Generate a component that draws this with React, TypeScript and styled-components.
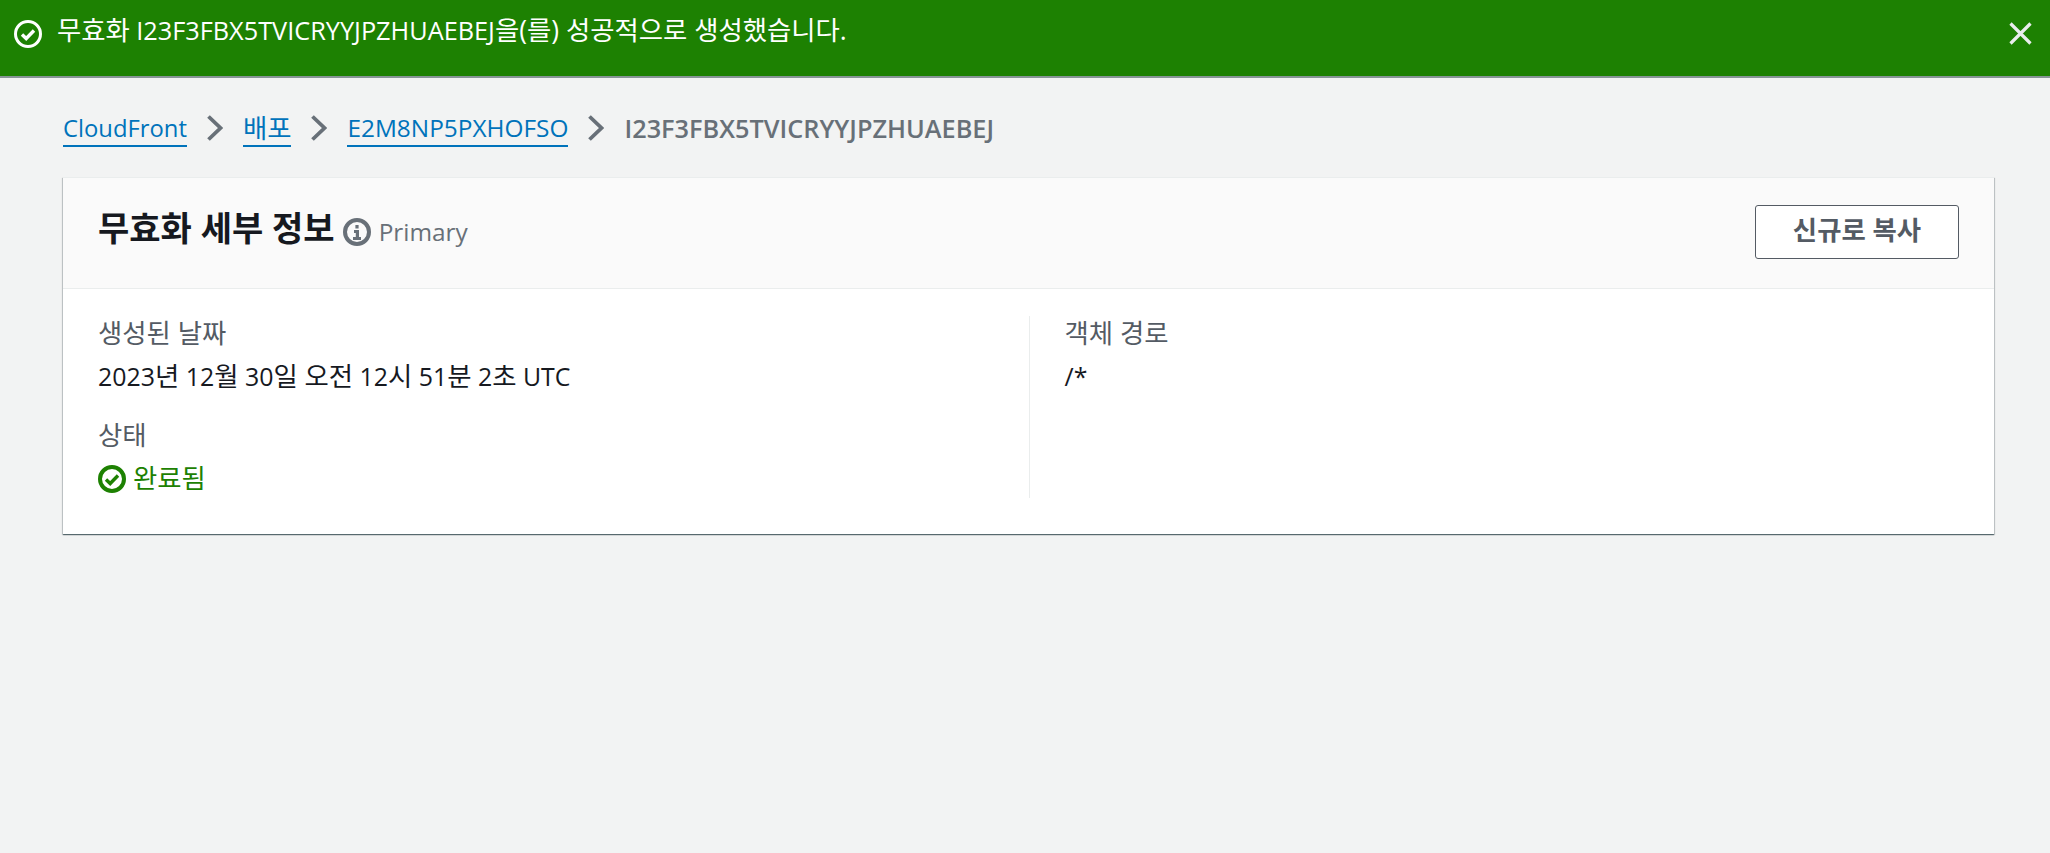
import React from "react";
import styled, { createGlobalStyle } from "styled-components";

const FONT = `"Open Sans", "Noto Sans CJK KR", sans-serif`;

const Global = createGlobalStyle`
  html, body { margin: 0; padding: 0; background: #f2f3f3; }
  body { font-family: ${FONT}; font-size: 24.4px; color: #16191f; }
  #root { min-height: 853px; }
`;

/* Hangul runs sit slightly larger than the Latin text around them */
const Ko = styled.span`
  font-size: 26.4px;
`;
const IdText = styled.span`
  font-size: 25.3px;
`;

const Banner = styled.div`
  display: flex;
  align-items: flex-start;
  box-sizing: border-box;
  height: 78px;
  background: #1d8102;
  border-bottom: 2px solid #879596;
  color: #fff;
  padding: 20px 18px 0 14px;
`;
const BannerIcon = styled.span`
  display: flex;
`;
const BannerText = styled.div`
  flex: 1;
  line-height: 36px;
  margin-left: 15px;
  margin-top: -8px;
`;
const CloseBtn = styled.button`
  background: none;
  border: 0;
  padding: 0;
  display: flex;
  width: 23px;
  height: 23px;
  margin-top: 2px;
  color: #eaeded;
`;
const Content = styled.main`
  padding: 0 56px 0 63px;
`;
const Crumbs = styled.nav`
  display: flex;
  align-items: center;
  height: 36px;
  margin-top: 32px;
  margin-bottom: 31px;
`;
const Crumb = styled.a<{ $size?: number }>`
  color: #0073bb;
  font-size: ${(p) => p.$size ?? 23.8}px;
  line-height: 32px;
  text-decoration: none;
  border-bottom: 2px solid #0073bb;
  height: 33px;
  margin-top: 3px;
`;
const Sep = styled.span`
  display: flex;
  margin: 0 20px;
  color: #687078;
`;
const Current = styled.span`
  color: #687078;
  font-size: 25.3px;
  font-weight: 600;
`;
const Card = styled.section`
  background: #fff;
  box-shadow: 0 1px 1px 0 rgba(0, 28, 36, 0.5), 1px 1px 1px 0 rgba(0, 28, 36, 0.15), -1px 1px 1px 0 rgba(0, 28, 36, 0.15);
  border-top: 1px solid #eaeded;
`;
const CardHeader = styled.header`
  display: flex;
  align-items: center;
  justify-content: space-between;
  height: 110px;
  background: #fafafa;
  border-bottom: 1px solid #eaeded;
  padding: 0 35px;
`;
const TitleRow = styled.div`
  display: flex;
  align-items: center;
  margin-top: -10px;
`;
const Title = styled.h2`
  margin: 0;
  font-size: 34px;
  font-weight: 700;
  line-height: 40px;
  color: #16191f;
`;
const InfoIcon = styled.span`
  display: flex;
  margin-left: 8px;
  margin-top: 8px;
  color: #687078;
`;
const Primary = styled.span`
  margin-left: 8px;
  margin-top: 6px;
  color: #687078;
`;
const Button = styled.button`
  width: 204px;
  height: 54px;
  box-sizing: border-box;
  border: 1px solid #545b64;
  border-radius: 3px;
  background: #fff;
  color: #545b64;
  font-family: ${FONT};
  font-size: 26.4px;
  font-weight: 700;
  padding: 0 0 8px;
  margin-top: -2px;
`;
const CardBody = styled.div`
  display: grid;
  grid-template-columns: 1fr 1fr;
  padding: 27px 35px 36px;
`;
const Col = styled.div<{ $second?: boolean }>`
  display: flex;
  flex-direction: column;
  height: 182px;
  ${(p) => (p.$second ? "border-left: 1px solid #eaeded; padding-left: 35px;" : "")}
`;
const Field = styled.div`
  margin-bottom: 24px;
`;
const Label = styled.div`
  color: #545b64;
  font-size: 26.4px;
  line-height: 36px;
  margin-top: -1px;
`;
const Value = styled.div`
  color: #16191f;
  font-size: 24.9px;
  line-height: 36px;
  margin-top: 7px;
`;
const Status = styled.div`
  display: flex;
  align-items: center;
  color: #1d8102;
  line-height: 36px;
  margin-top: 7px;
`;
const StatusText = styled.span`
  margin-left: 7px;
`;

const CheckCircle = ({ ring = 3 }: { ring?: number }) => (
  <svg width="28" height="28" viewBox="0 0 28 28" fill="none" stroke="currentColor">
    <circle cx="14" cy="14" r={14 - ring / 2} strokeWidth={ring} />
    <path d="M8 14.5l4.2 4 7.8-8" strokeWidth="3.4" />
  </svg>
);

const Chevron = () => (
  <svg width="16" height="26" viewBox="0 0 16 26" fill="none" stroke="currentColor" strokeWidth="3.8">
    <path d="M1.5 1.5L13.5 13 1.5 24.5" />
  </svg>
);

const Info = () => (
  <svg width="28" height="28" viewBox="0 0 28 28" fill="none" stroke="currentColor">
    <circle cx="14" cy="14" r="12" strokeWidth="4" />
    <path d="M14 7v3.4M11 13.5h3.4v6.5M10 20.5h8" strokeWidth="3.2" />
  </svg>
);

export default function App() {
  return (
    <>
      <Global />
      <Banner>
        <BannerIcon>
          <CheckCircle />
        </BannerIcon>
        <BannerText>
          <Ko>무효화</Ko> <IdText>I23F3FBX5TVICRYYJPZHUAEBEJ</IdText><Ko>을(를) 성공적으로 생성했습니다.</Ko>
        </BannerText>
        <CloseBtn aria-label="닫기">
          <svg width="23" height="23" viewBox="0 0 23 23" fill="none" stroke="currentColor" strokeWidth="3.2">
            <path d="M1.5 1.5l20 20M21.5 1.5l-20 20" />
          </svg>
        </CloseBtn>
      </Banner>
      <Content>
        <Crumbs>
          <Crumb>CloudFront</Crumb>
          <Sep><Chevron /></Sep>
          <Crumb><Ko>배포</Ko></Crumb>
          <Sep><Chevron /></Sep>
          <Crumb $size={24.4}>E2M8NP5PXHOFSO</Crumb>
          <Sep><Chevron /></Sep>
          <Current>I23F3FBX5TVICRYYJPZHUAEBEJ</Current>
        </Crumbs>
        <Card>
          <CardHeader>
            <TitleRow>
              <Title>무효화 세부 정보</Title>
              <InfoIcon><Info /></InfoIcon>
              <Primary>Primary</Primary>
            </TitleRow>
            <Button>신규로 복사</Button>
          </CardHeader>
          <CardBody>
            <Col>
              <Field>
                <Label>생성된 날짜</Label>
                <Value>2023<Ko>년</Ko> 12<Ko>월</Ko> 30<Ko>일 오전</Ko> 12<Ko>시</Ko> 51<Ko>분</Ko> 2<Ko>초</Ko> UTC</Value>
              </Field>
              <Field>
                <Label>상태</Label>
                <Status>
                  <CheckCircle ring={4} />
                  <StatusText><Ko>완료됨</Ko></StatusText>
                </Status>
              </Field>
            </Col>
            <Col $second>
              <Field>
                <Label>객체 경로</Label>
                <Value>/*</Value>
              </Field>
            </Col>
          </CardBody>
        </Card>
      </Content>
    </>
  );
}
